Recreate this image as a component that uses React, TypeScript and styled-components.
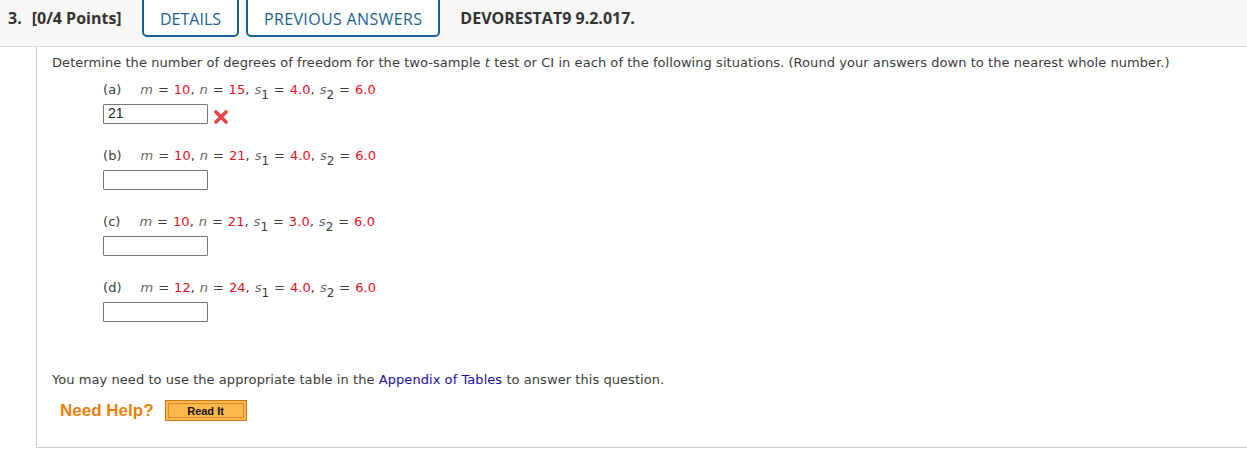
import React from 'react';
import styled, { createGlobalStyle } from 'styled-components';

const Global = createGlobalStyle`
  html, body { margin: 0; padding: 0; background: #fff; }
  body { font-family: "DejaVu Sans", Verdana, sans-serif; color: #3c3c3c; }
`;

const Header = styled.div`
  height: 46px;
  background: #f7f7f7;
  border-bottom: 1px solid #dcdcdc;
  display: flex;
  align-items: flex-start;
  font-family: "Open Sans", sans-serif;
`;

const Title = styled.div`
  display: flex;
  gap: 10px;
  padding: 7px 0 0 8px;
  font-size: 16px;
  font-weight: 700;
  color: #333;
  width: 134px;
`;

const TabButton = styled.div`
  margin-top: -4px;
  height: 41px;
  padding: 4px 16px 0 16px;
  box-sizing: border-box;
  display: flex;
  align-items: center;
  border: 2px solid #1b5f93;
  border-radius: 5px;
  background: #fff;
  color: #1b5f93;
  font-size: 16px;
  font-weight: 500;
  letter-spacing: ${(p: { spread?: number }) => p.spread ?? 0}px;
  margin-right: 7px;
`;

const Ref = styled.div`
  padding: 7px 0 0 13px;
  font-size: 16px;
  font-weight: 700;
  color: #333;
`;

const Panel = styled.div`
  margin-left: 36px;
  border-left: 1px solid #ccc;
  border-bottom: 1px solid #ccc;
  padding: 8px 0 25px 15px;
  font-family: "DejaVu Sans", Verdana, sans-serif;
  font-size: 13px;
  letter-spacing: 0.06px;
  height: 401px;
  box-sizing: border-box;
`;

const Prompt = styled.p`
  margin: 0;
  line-height: 16px;
`;

const Part = styled.div`
  margin-left: 51px;
  height: 66px;
  padding-top: 11px;
  box-sizing: border-box;
`;

const PartLine = styled.div`
  display: flex;
  gap: 19px;
  line-height: 16px;
  height: 16px;
`;

const Expr = styled.span`
  white-space: pre;
  word-spacing: 0.7px;
`;

const Var = styled.i`
  color: #666;
`;

const Num = styled.span`
  color: #e8101e;
`;

const Sub = styled.sub`
  font-size: 12px;
  vertical-align: -5px;
  line-height: 0;
`;

const AnswerRow = styled.div`
  display: flex;
  align-items: center;
  margin-top: 6px;
  gap: 6px;
`;

const Answer = styled.div`
  width: 105px;
  height: 20px;
  box-sizing: border-box;
  border: 1px solid #777;
  border-radius: 1px;
  font-family: "Liberation Sans", Arial, sans-serif;
  font-size: 14px;
  line-height: 17px;
  color: #222;
  padding: 0 0 0 4px;
`;

const Note = styled.p`
  margin: 37px 0 0;
  line-height: 16px;
`;

const Link = styled.span`
  color: #1a0dab;
`;

const Help = styled.div`
  display: flex;
  align-items: center;
  margin: 12px 0 0 8px;
  gap: 11px;
`;

const HelpLabel = styled.span`
  font-family: "Liberation Sans", Arial, sans-serif;
  font-weight: 700;
  font-size: 17px;
  letter-spacing: 0;
  color: #e8800e;
`;

const ReadIt = styled.div`
  width: 82px;
  height: 21px;
  box-sizing: border-box;
  border: 1px solid #c9761b;
  background: #fdb84b;
  box-shadow: inset 0 0 0 2px #fdb84b, inset 0 0 0 3px #d58a2c;
  display: flex;
  align-items: center;
  justify-content: center;
  font-family: "Liberation Sans", Arial, sans-serif;
  font-weight: 700;
  font-size: 11px;
  letter-spacing: 0;
  color: #111;
`;

const WrongMark = () => (
  <svg width="14" height="14" viewBox="0 0 14 14" style={{ marginTop: 6 }}>
    <path d="M2 2 L12 12 M12 2 L2 12" stroke="#e8454b" strokeWidth="3.6" strokeLinecap="round" />
  </svg>
);

const parts = [
  { label: '(a)', m: '10', n: '15', s1: '4.0', s2: '6.0', value: '21', wrong: true },
  { label: '(b)', m: '10', n: '21', s1: '4.0', s2: '6.0' },
  { label: '(c)', m: '10', n: '21', s1: '3.0', s2: '6.0' },
  { label: '(d)', m: '12', n: '24', s1: '4.0', s2: '6.0' },
];

export default function App() {
  return (
    <>
      <Global />
      <Header>
        <Title>
          <span>3.</span>
          <span>[0/4 Points]</span>
        </Title>
        <TabButton>DETAILS</TabButton>
        <TabButton spread={0.35}>PREVIOUS ANSWERS</TabButton>
        <Ref>DEVORESTAT9 9.2.017.</Ref>
      </Header>
      <Panel>
        <Prompt>
          Determine the number of degrees of freedom for the two-sample <i>t</i> test or CI in each of the following situations. (Round your answers down to the nearest whole number.)
        </Prompt>
        {parts.map((p) => (
          <Part key={p.label}>
            <PartLine>
              <span>{p.label}</span>
              <Expr>
                <Var>m</Var> = <Num>{p.m}</Num>, <Var>n</Var> = <Num>{p.n}</Num>, <Var>s</Var>
                <Sub>1</Sub> = <Num>{p.s1}</Num>, <Var>s</Var>
                <Sub>2</Sub> = <Num>{p.s2}</Num>
              </Expr>
            </PartLine>
            <AnswerRow>
              <Answer>{p.value}</Answer>
              {p.wrong && <WrongMark />}
            </AnswerRow>
          </Part>
        ))}
        <Note>
          You may need to use the appropriate table in the <Link>Appendix of Tables</Link> to answer this question.
        </Note>
        <Help>
          <HelpLabel>Need Help?</HelpLabel>
          <ReadIt>Read It</ReadIt>
        </Help>
      </Panel>
    </>
  );
}
